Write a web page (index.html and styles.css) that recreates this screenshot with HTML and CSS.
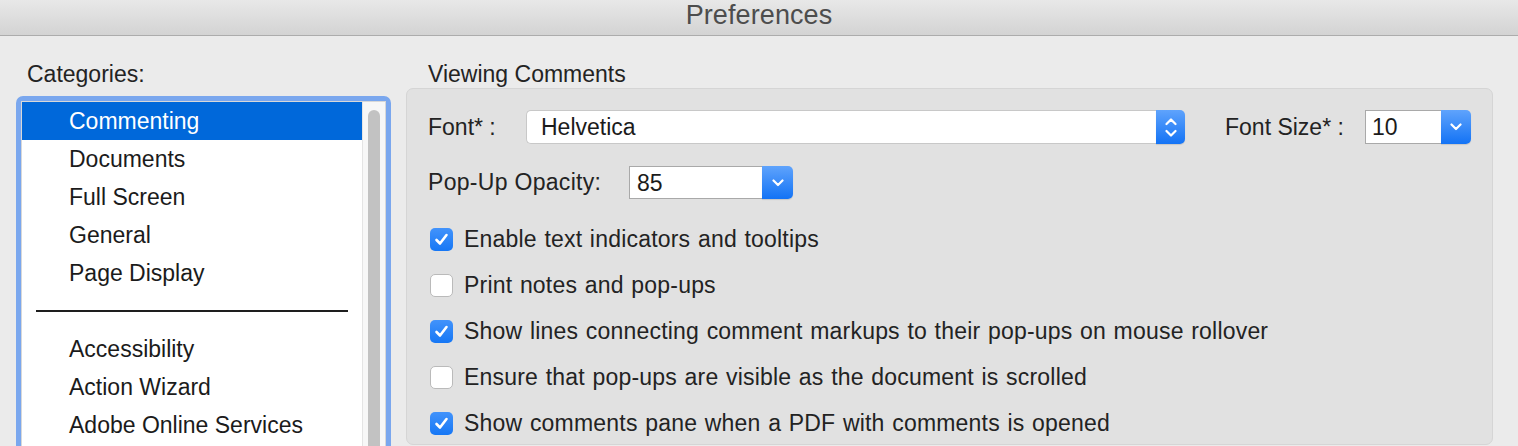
FILE: index.html
```html
<!DOCTYPE html>
<html lang="en">
<head>
<meta charset="utf-8">
<title>Preferences</title>
<link rel="stylesheet" href="styles.css">
</head>
<body>
<div class="window">
  <header class="titlebar"><span class="title">Preferences</span></header>
  <main class="content">
    <aside class="categories">
      <div class="heading">Categories:</div>
      <div class="listbox-ring">
        <div class="listbox">
          <ul class="list">
            <li class="item selected">Commenting</li>
            <li class="item">Documents</li>
            <li class="item">Full Screen</li>
            <li class="item">General</li>
            <li class="item">Page Display</li>
            <li class="divider"></li>
            <li class="item">Accessibility</li>
            <li class="item">Action Wizard</li>
            <li class="item">Adobe Online Services</li>
          </ul>
          <div class="scrollbar"><div class="thumb"></div></div>
        </div>
      </div>
    </aside>
    <section class="pane">
      <div class="heading heading-pane">Viewing Comments</div>
      <div class="group">
        <div class="row row-font">
          <span class="label label-font">Font* :</span>
          <div class="select select-font">
            <span class="value">Helvetica</span>
            <span class="btn btn-font">
              <svg width="12" height="19" viewBox="0 0 12 19" fill="none" stroke="#fff" stroke-width="2.2" stroke-linecap="round" stroke-linejoin="round"><path d="M1.5 6 L6 1.5 L10.5 6"/><path d="M1.5 13 L6 17.5 L10.5 13"/></svg>
            </span>
          </div>
          <span class="label label-size">Font Size* :</span>
          <div class="select select-size">
            <span class="value">10</span>
            <span class="btn btn-size">
              <svg width="12" height="8" viewBox="0 0 12 8" fill="none" stroke="#fff" stroke-width="2.2" stroke-linecap="round" stroke-linejoin="round"><path d="M1.5 1.5 L6 6 L10.5 1.5"/></svg>
            </span>
          </div>
        </div>
        <div class="row row-opacity">
          <span class="label label-opacity">Pop-Up Opacity:</span>
          <div class="select select-opacity">
            <span class="value">85</span>
            <span class="btn btn-opacity">
              <svg width="12" height="8" viewBox="0 0 12 8" fill="none" stroke="#fff" stroke-width="2.2" stroke-linecap="round" stroke-linejoin="round"><path d="M1.5 1.5 L6 6 L10.5 1.5"/></svg>
            </span>
          </div>
        </div>
        <ul class="checks">
          <li class="check">
            <span class="box checked"><svg width="23" height="23" viewBox="0 0 23 23" fill="none" stroke="#fff" stroke-width="2.6" stroke-linecap="round" stroke-linejoin="round"><path d="M6.5 12 L10 15.5 L16.5 7"/></svg></span>
            <span class="check-text">Enable text indicators and tooltips</span>
          </li>
          <li class="check">
            <span class="box"></span>
            <span class="check-text">Print notes and pop-ups</span>
          </li>
          <li class="check">
            <span class="box checked"><svg width="23" height="23" viewBox="0 0 23 23" fill="none" stroke="#fff" stroke-width="2.6" stroke-linecap="round" stroke-linejoin="round"><path d="M6.5 12 L10 15.5 L16.5 7"/></svg></span>
            <span class="check-text">Show lines connecting comment markups to their pop-ups on mouse rollover</span>
          </li>
          <li class="check">
            <span class="box"></span>
            <span class="check-text">Ensure that pop-ups are visible as the document is scrolled</span>
          </li>
          <li class="check">
            <span class="box checked"><svg width="23" height="23" viewBox="0 0 23 23" fill="none" stroke="#fff" stroke-width="2.6" stroke-linecap="round" stroke-linejoin="round"><path d="M6.5 12 L10 15.5 L16.5 7"/></svg></span>
            <span class="check-text">Show comments pane when a PDF with comments is opened</span>
          </li>
        </ul>
      </div>
    </section>
  </main>
</div>
</body>
</html>
```

FILE: styles.css
```css
* {
  box-sizing: border-box;
}

html,
body {
  margin: 0;
  padding: 0;
}

body {
  width: 1518px;
  height: 446px;
  overflow: hidden;
  background: #ebebeb;
  color: #232323;
  font-family: "Liberation Sans", Arial, sans-serif;
  font-size: 23px;
}

.window {
  height: 446px;
  overflow: hidden;
}

/* Title bar */
.titlebar {
  height: 36px;
  border-bottom: 1px solid #acacac;
  background: linear-gradient(#e8e8e8, #d3d3d3);
  display: flex;
  align-items: center;
  justify-content: center;
  padding-bottom: 4px;
}

.title {
  color: #4d4d4d;
  font-size: 27px;
  letter-spacing: 0.1px;
}

/* Two-column body */
.content {
  display: flex;
  gap: 15px;
  padding: 24px 0 0 16px;
}

.heading {
  height: 28px;
  line-height: 28px;
  padding-left: 11px;
}

.heading-pane {
  padding-left: 22px;
}

/* Category list */
.categories {
  width: 375px;
  flex: none;
}

.listbox-ring {
  margin-top: 8px;
  border: 5px solid #7aa7ee;
  border-bottom: none;
  border-radius: 7px 7px 0 0;
  height: 400px;
}

.listbox {
  height: 100%;
  display: flex;
  border: 1px solid #d8d8d8;
  border-bottom: none;
  background: #fff;
}

.list {
  flex: 1;
  list-style: none;
  margin: 0;
  padding: 0;
}

.item {
  height: 38px;
  line-height: 38px;
  padding-left: 47px;
  color: #1b1b1b;
  white-space: nowrap;
}

.item.selected {
  background: #0068da;
  color: #fff;
}

.divider {
  height: 38px;
  display: flex;
  align-items: center;
  padding: 0 14px;
}

.divider::before {
  content: "";
  flex: 1;
  height: 2px;
  background: #1e1e1e;
}

.scrollbar {
  width: 23px;
  flex: none;
  border-left: 1px solid #e4e4e4;
  background: #f7f7f7;
  padding: 8px 0 0 5px;
}

.thumb {
  width: 12px;
  height: 400px;
  border-radius: 6px;
  background: #c2c2c2;
}

/* Settings pane */
.pane {
  width: 1087px;
  flex: none;
}

.group {
  height: 357px;
  border: 1px solid #d5d5d5;
  border-radius: 7px;
  background: #e1e1e1;
  padding: 21px 0 0 21px;
}

.row {
  display: flex;
  align-items: center;
}

.row-font {
  height: 34px;
}

.row-opacity {
  height: 33px;
  margin-top: 22px;
}

.label {
  flex: none;
  white-space: nowrap;
}

.label-font {
  width: 98px;
}

.label-size {
  width: 140px;
  margin-left: 40px;
}

.label-opacity {
  width: 201px;
  letter-spacing: 0.3px;
}

/* Pop-up buttons */
.select {
  display: flex;
  height: 100%;
  flex: none;
}

.select .value {
  flex: 1;
  display: flex;
  align-items: center;
  background: #fff;
  border: 1px solid #a9a9a9;
  border-right: none;
  color: #1b1b1b;
  padding-top: 1px;
}

.select-font {
  width: 659px;
}

.select-font .value {
  border-color: #c8c8c8;
  border-radius: 5px 0 0 5px;
  padding-left: 14px;
}

.select-size {
  width: 106px;
}

.select-size .value {
  padding-left: 6px;
}

.select-opacity {
  width: 164px;
}

.select-opacity .value {
  padding-left: 7px;
}

.btn {
  flex: none;
  display: flex;
  align-items: center;
  justify-content: center;
  background: linear-gradient(#5fa3fc, #1373f5);
  border-radius: 0 5px 5px 0;
  box-shadow: 0 1px 1px rgba(0, 0, 0, 0.12);
}

.btn-font {
  width: 29px;
}

.btn-size {
  width: 30px;
}

.btn-opacity {
  width: 31px;
}

/* Checkbox list */
.checks {
  list-style: none;
  margin: 17px 0 0;
  padding: 0;
}

.check {
  height: 46px;
  display: flex;
  align-items: center;
  white-space: nowrap;
}

.check-text {
  letter-spacing: 0.2px;
  word-spacing: 1px;
}

.box {
  flex: none;
  width: 23px;
  height: 23px;
  margin-left: 2px;
  margin-right: 11px;
  border-radius: 5px;
  background: #fff;
  border: 1px solid #bababa;
  display: flex;
  align-items: center;
  justify-content: center;
}

.box.checked {
  border: none;
  background: linear-gradient(#4293fb, #1677f5);
}

.box svg {
  display: block;
}
```
